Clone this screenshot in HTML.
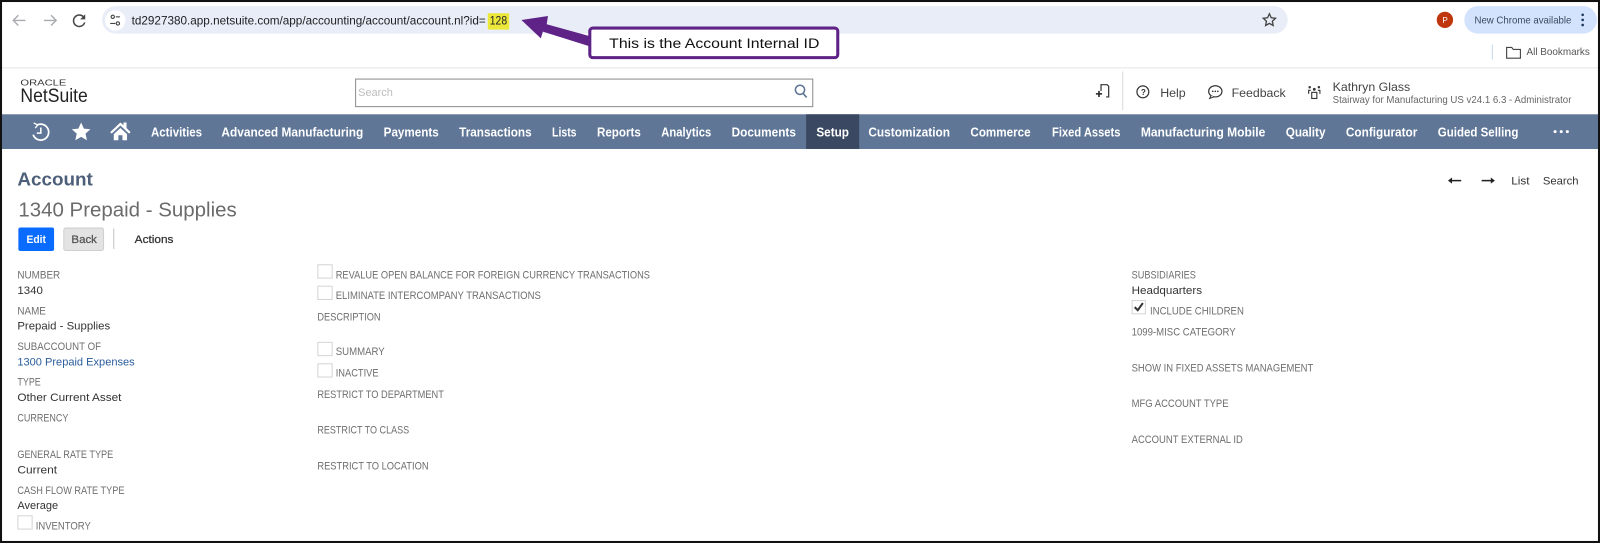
<!DOCTYPE html>
<html>
<head>
<meta charset="utf-8">
<title>Account</title>
<style>
html,body{margin:0;padding:0;background:#fff;width:1600px;height:543px;overflow:hidden}
svg{display:block;filter:blur(.3px)}
text{font-family:"Liberation Sans",sans-serif;white-space:pre}
.l{font-size:10.5px;fill:#6f6f6f}
.v{font-size:11px;fill:#333}
.n{font-size:12.5px;font-weight:bold;fill:#fff}
.cb{fill:#fff;stroke:#d4d4d4;stroke-width:1}
</style>
</head>
<body>
<svg width="1600" height="543" viewBox="0 0 1568 532.14" preserveAspectRatio="none" xmlns="http://www.w3.org/2000/svg">
<rect width="1568" height="533" fill="#fff"/>

<!-- browser toolbar -->
<g fill="none" stroke="#a9abae" stroke-width="1.4">
<path d="M25 20H13M18 15l-5 5 5 5"/>
<path d="M43 20h12M50 15l5 5-5 5"/>
</g>
<path d="M82.5 17.5A5.6 5.6 0 1 0 83 22" fill="none" stroke="#474747" stroke-width="1.5"/>
<path d="M83.5 14v5h-5z" fill="#474747"/>
<rect x="100" y="6" width="1162" height="27" rx="13.5" fill="#e9edf7"/>
<circle cx="113" cy="20" r="10" fill="#fff"/>
<g fill="none" stroke="#444" stroke-width="1.1">
<circle cx="110.5" cy="16.5" r="1.6"/><path d="M113.5 16.5h4"/>
<circle cx="115.5" cy="23" r="1.6"/><path d="M108 23h5"/>
</g>
<text x="129" y="24" font-size="11.5" fill="#202124" textLength="347" lengthAdjust="spacingAndGlyphs">td2927380.app.netsuite.com/app/accounting/account/account.nl?id=</text>
<rect x="478" y="13" width="21" height="16" fill="#ece83a"/>
<text x="480" y="24" font-size="11.5" fill="#202124" textLength="17" lengthAdjust="spacingAndGlyphs">128</text>
<path d="M1244 13.5l1.800 3.900 4.200.5-3.100 2.900.8 4.200-3.700-2.100-3.700 2.100.8-4.200-3.100-2.900 4.200-.5z" fill="none" stroke="#444" stroke-width="1.3"/>
<circle cx="1416" cy="19.5" r="8" fill="#bf360c"/>
<text x="1413.5" y="22.5" font-size="8" fill="#fff">P</text>
<rect x="1435" y="6" width="130" height="27" rx="13.5" fill="#d3e3fd"/>
<text x="1445" y="23" font-size="10" fill="#3c4a5e" textLength="95" lengthAdjust="spacingAndGlyphs">New Chrome available</text>
<g fill="#1f3a5f"><circle cx="1551" cy="14.5" r="1.3"/><circle cx="1551" cy="19.5" r="1.3"/><circle cx="1551" cy="24.5" r="1.3"/></g>

<!-- bookmarks -->
<rect x="1462" y="44" width="1" height="14" fill="#c5d6ea"/>
<path d="M1476.5 46.5h5l1.500 2h7v8.500h-13.500z" fill="none" stroke="#444" stroke-width="1.1"/>
<text x="1496" y="54" font-size="10" fill="#555" textLength="62" lengthAdjust="spacingAndGlyphs">All Bookmarks</text>
<rect x="2" y="66" width="1564" height="1" fill="#e6e6e6"/>

<!-- callout arrow -->
<path d="M511 19.6 L537 15.7 L535.8 23.8 L580 36 L580 46 L532 31 L530 37.6 Z" fill="#5f2388"/>
<rect x="578" y="27.5" width="243" height="29" rx="3" fill="#fff" stroke="#5f2388" stroke-width="3"/>
<text x="597" y="47" font-size="14" fill="#111" textLength="206" lengthAdjust="spacingAndGlyphs">This is the Account Internal ID</text>

<!-- logo -->
<text x="20" y="84" font-size="8" fill="#333" textLength="45" lengthAdjust="spacingAndGlyphs">ORACLE</text>
<text x="20" y="100" font-size="19" fill="#222" textLength="66" lengthAdjust="spacingAndGlyphs">NetSuite</text>

<!-- search -->
<rect x="348.5" y="77.5" width="448" height="27" fill="#fff" stroke="#8c8c8c"/>
<text x="351" y="94" font-size="11" fill="#bcbcbc" textLength="34" lengthAdjust="spacingAndGlyphs">Search</text>
<circle cx="784" cy="88" r="4.5" fill="none" stroke="#5d7595" stroke-width="1.5"/>
<path d="M787 91.5l3.500 4" stroke="#5d7595" stroke-width="1.6"/>

<!-- top right -->
<path d="M1079 89v-6h6l1.500 1.500V95H1084" fill="none" stroke="#333" stroke-width="1.2"/>
<path d="M1074 92h6M1077 89v6" stroke="#222" stroke-width="1.5"/>
<rect x="1100" y="70" width=".7" height="38" fill="#c8c8c8"/>
<circle cx="1120" cy="90" r="5.8" fill="none" stroke="#333" stroke-width="1.2"/>
<text x="1118" y="93" font-size="8" font-weight="bold" fill="#333">?</text>
<text x="1137" y="95" font-size="12" fill="#444" textLength="25" lengthAdjust="spacingAndGlyphs">Help</text>
<ellipse cx="1191" cy="89.5" rx="6.5" ry="5.5" fill="none" stroke="#333" stroke-width="1.2"/>
<path d="M1187 93.5l-1.500 3 4-1.500" fill="#fff" stroke="#333" stroke-width="1"/>
<g fill="#333"><circle cx="1188.5" cy="89.5" r=".8"/><circle cx="1191" cy="89.5" r=".8"/><circle cx="1193.5" cy="89.5" r=".8"/></g>
<text x="1207" y="95" font-size="12" fill="#444" textLength="53" lengthAdjust="spacingAndGlyphs">Feedback</text>
<g fill="none" stroke="#333" stroke-width="1.1">
<rect x="1285.5" y="90.5" width="5" height="6"/>
<path d="M1282.5 92v-3.500h2M1293.500 92v-3.500h-2"/>
</g>
<g fill="#333"><circle cx="1288" cy="87.5" r="1.4"/><circle cx="1283.5" cy="85.5" r="1.2"/><circle cx="1292.5" cy="85.5" r="1.2"/></g>
<text x="1306" y="89" font-size="12" fill="#444" textLength="76" lengthAdjust="spacingAndGlyphs">Kathryn Glass</text>
<text x="1306" y="101" font-size="9.5" fill="#666" textLength="234" lengthAdjust="spacingAndGlyphs">Stairway for Manufacturing US v24.1 6.3 - Administrator</text>

<!-- nav -->
<rect x="2" y="112" width="1564" height="34" fill="#5f7697"/>
<rect x="790" y="112" width="52" height="34" fill="#3a4961"/>
<path d="M36.5 122.500A7.800 7.800 0 1 1 32.500 132" fill="none" stroke="#fff" stroke-width="1.7"/>
<path d="M40 125v5.500h-4" fill="none" stroke="#fff" stroke-width="1.5"/>
<path d="M33 120.500l4 2-2.500 3" fill="none" stroke="#fff" stroke-width="1.3"/>
<path d="M79.5 120l2.700 6 6.400.7-4.800 4.300 1.400 6.400-5.700-3.300-5.700 3.300 1.400-6.400-4.800-4.300 6.400-.7z" fill="#fff"/>
<path d="M118 120l-10 9.500 1.500 1.500 8.500-8 8.500 8 1.500-1.500-4-4v-5.500h-3v2.700z" fill="#fff"/>
<path d="M111.5 131.500l6.500-6 6.500 6v6h-4.500v-5h-4v5h-4.500z" fill="#fff"/>
<text class="n" x="148" y="134" textLength="50" lengthAdjust="spacingAndGlyphs">Activities</text>
<text class="n" x="217" y="134" textLength="139" lengthAdjust="spacingAndGlyphs">Advanced Manufacturing</text>
<text class="n" x="376" y="134" textLength="54" lengthAdjust="spacingAndGlyphs">Payments</text>
<text class="n" x="450" y="134" textLength="71" lengthAdjust="spacingAndGlyphs">Transactions</text>
<text class="n" x="541" y="134" textLength="24" lengthAdjust="spacingAndGlyphs">Lists</text>
<text class="n" x="585" y="134" textLength="43" lengthAdjust="spacingAndGlyphs">Reports</text>
<text class="n" x="648" y="134" textLength="49" lengthAdjust="spacingAndGlyphs">Analytics</text>
<text class="n" x="717" y="134" textLength="63" lengthAdjust="spacingAndGlyphs">Documents</text>
<text class="n" x="800" y="134" textLength="32" lengthAdjust="spacingAndGlyphs">Setup</text>
<text class="n" x="851" y="134" textLength="80" lengthAdjust="spacingAndGlyphs">Customization</text>
<text class="n" x="951" y="134" textLength="59" lengthAdjust="spacingAndGlyphs">Commerce</text>
<text class="n" x="1031" y="134" textLength="67" lengthAdjust="spacingAndGlyphs">Fixed Assets</text>
<text class="n" x="1118" y="134" textLength="122" lengthAdjust="spacingAndGlyphs">Manufacturing Mobile</text>
<text class="n" x="1260" y="134" textLength="39" lengthAdjust="spacingAndGlyphs">Quality</text>
<text class="n" x="1319" y="134" textLength="70" lengthAdjust="spacingAndGlyphs">Configurator</text>
<text class="n" x="1409" y="134" textLength="79" lengthAdjust="spacingAndGlyphs">Guided Selling</text>
<g fill="#fff"><circle cx="1524" cy="129" r="1.5"/><circle cx="1530" cy="129" r="1.5"/><circle cx="1536" cy="129" r="1.5"/></g>

<!-- page title -->
<text x="17" y="182" font-size="18" font-weight="bold" fill="#4d5f79" textLength="74" lengthAdjust="spacingAndGlyphs">Account</text>
<text x="18" y="212" font-size="20" fill="#6b6b6b" textLength="214" lengthAdjust="spacingAndGlyphs">1340 Prepaid - Supplies</text>
<rect x="18" y="223" width="35" height="23" rx="2" fill="#0a6cff"/>
<text x="26" y="238" font-size="11" font-weight="bold" fill="#fff" textLength="19" lengthAdjust="spacingAndGlyphs">Edit</text>
<rect x="62.5" y="223.5" width="39" height="22" rx="2" fill="#e3e3e3" stroke="#cfcfcf"/>
<text x="70" y="238" font-size="11" fill="#555" stroke="#555" stroke-width=".25" textLength="25" lengthAdjust="spacingAndGlyphs">Back</text>
<rect x="111" y="224" width="1" height="20" fill="#c4c4c4"/>
<text x="132" y="238" font-size="11" fill="#333" stroke="#333" stroke-width=".25" textLength="38" lengthAdjust="spacingAndGlyphs">Actions</text>

<!-- pager -->
<path d="M1432 177h-11" stroke="#222" stroke-width="1.5"/><path d="M1419 177l4-3v6z" fill="#222"/>
<path d="M1452 177h11" stroke="#222" stroke-width="1.5"/><path d="M1465 177l-4-3v6z" fill="#222"/>
<text x="1481" y="181" font-size="11" fill="#333" textLength="18" lengthAdjust="spacingAndGlyphs">List</text>
<text x="1512" y="181" font-size="11" fill="#333" textLength="35" lengthAdjust="spacingAndGlyphs">Search</text>

<!-- column 1 -->
<text class="l" x="17" y="273" textLength="42" lengthAdjust="spacingAndGlyphs">NUMBER</text>
<text class="v" x="17" y="288" textLength="25" lengthAdjust="spacingAndGlyphs">1340</text>
<text class="l" x="17" y="308" textLength="28" lengthAdjust="spacingAndGlyphs">NAME</text>
<text class="v" x="17" y="323" textLength="91" lengthAdjust="spacingAndGlyphs">Prepaid - Supplies</text>
<text class="l" x="17" y="343" textLength="82" lengthAdjust="spacingAndGlyphs">SUBACCOUNT OF</text>
<text class="v" x="17" y="358" textLength="115" lengthAdjust="spacingAndGlyphs" style="fill:#2a5d9c">1300 Prepaid Expenses</text>
<text class="l" x="17" y="378" textLength="23" lengthAdjust="spacingAndGlyphs">TYPE</text>
<text class="v" x="17" y="393" textLength="102" lengthAdjust="spacingAndGlyphs">Other Current Asset</text>
<text class="l" x="17" y="413" textLength="50" lengthAdjust="spacingAndGlyphs">CURRENCY</text>
<text class="l" x="17" y="449" textLength="94" lengthAdjust="spacingAndGlyphs">GENERAL RATE TYPE</text>
<text class="v" x="17" y="464" textLength="39" lengthAdjust="spacingAndGlyphs">Current</text>
<text class="l" x="17" y="484" textLength="105" lengthAdjust="spacingAndGlyphs">CASH FLOW RATE TYPE</text>
<text class="v" x="17" y="499" textLength="40" lengthAdjust="spacingAndGlyphs">Average</text>
<rect class="cb" x="17.5" y="505.5" width="14" height="13"/>
<text class="l" x="35" y="519" textLength="54" lengthAdjust="spacingAndGlyphs">INVENTORY</text>

<!-- column 2 -->
<rect class="cb" x="311.5" y="259.5" width="14" height="13"/>
<text class="l" x="329" y="273" textLength="308" lengthAdjust="spacingAndGlyphs">REVALUE OPEN BALANCE FOR FOREIGN CURRENCY TRANSACTIONS</text>
<rect class="cb" x="311.5" y="280.5" width="14" height="13"/>
<text class="l" x="329" y="293" textLength="201" lengthAdjust="spacingAndGlyphs">ELIMINATE INTERCOMPANY TRANSACTIONS</text>
<text class="l" x="311" y="314" textLength="62" lengthAdjust="spacingAndGlyphs">DESCRIPTION</text>
<rect class="cb" x="311.5" y="335.5" width="14" height="13"/>
<text class="l" x="329" y="348" textLength="48" lengthAdjust="spacingAndGlyphs">SUMMARY</text>
<rect class="cb" x="311.5" y="356.5" width="14" height="13"/>
<text class="l" x="329" y="369" textLength="42" lengthAdjust="spacingAndGlyphs">INACTIVE</text>
<text class="l" x="311" y="390" textLength="124" lengthAdjust="spacingAndGlyphs">RESTRICT TO DEPARTMENT</text>
<text class="l" x="311" y="425" textLength="90" lengthAdjust="spacingAndGlyphs">RESTRICT TO CLASS</text>
<text class="l" x="311" y="460" textLength="109" lengthAdjust="spacingAndGlyphs">RESTRICT TO LOCATION</text>

<!-- column 3 -->
<text class="l" x="1109" y="273" textLength="63" lengthAdjust="spacingAndGlyphs">SUBSIDIARIES</text>
<text class="v" x="1109" y="288" textLength="69" lengthAdjust="spacingAndGlyphs">Headquarters</text>
<rect class="cb" x="1109.5" y="294.5" width="13" height="13"/>
<path d="M1112 301l3 3 5-7" fill="none" stroke="#333" stroke-width="2"/>
<text class="l" x="1127" y="308" textLength="92" lengthAdjust="spacingAndGlyphs">INCLUDE CHILDREN</text>
<text class="l" x="1109" y="329" textLength="102" lengthAdjust="spacingAndGlyphs">1099-MISC CATEGORY</text>
<text class="l" x="1109" y="364" textLength="178" lengthAdjust="spacingAndGlyphs">SHOW IN FIXED ASSETS MANAGEMENT</text>
<text class="l" x="1109" y="399" textLength="95" lengthAdjust="spacingAndGlyphs">MFG ACCOUNT TYPE</text>
<text class="l" x="1109" y="434" textLength="109" lengthAdjust="spacingAndGlyphs">ACCOUNT EXTERNAL ID</text>

<!-- screenshot frame -->
<rect x="1" y="1" width="1566" height="530.14" fill="none" stroke="#111" stroke-width="2"/>
</svg>
</body>
</html>
